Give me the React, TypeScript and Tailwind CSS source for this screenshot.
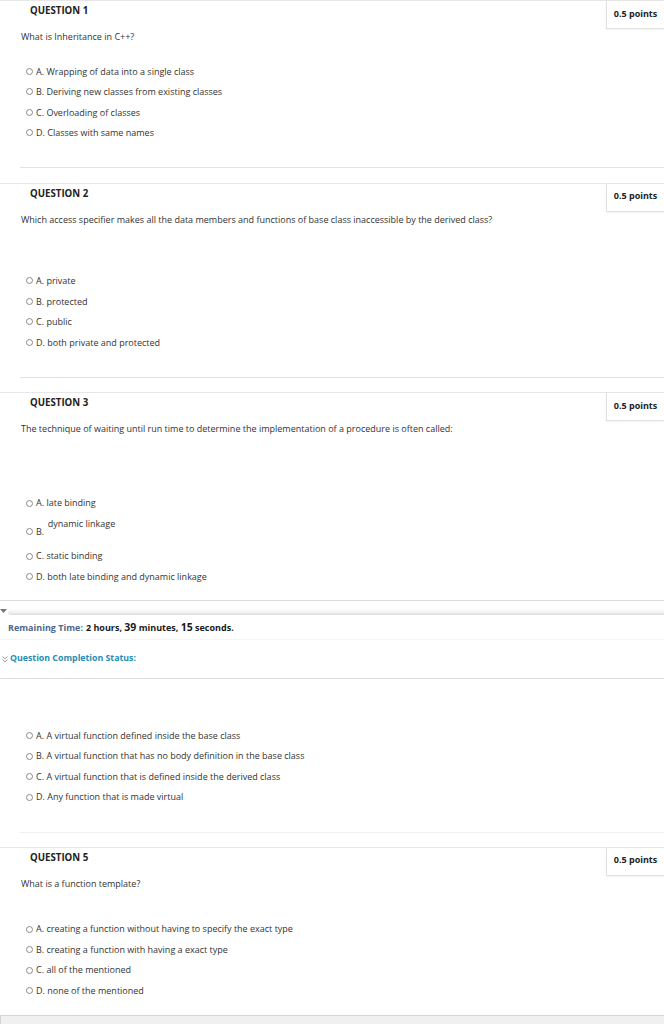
import React from 'react';

type Question = {
  num?: number;
  text?: string;
  gap: number;
  options: string[];
};

const Radio = () => (
  <span className="inline-block h-[7px] w-[7px] shrink-0 rounded-full border border-[#8a8a8a] bg-white" />
);

function Option({ label, text }: { label: string; text: string }) {
  return (
    <div className="flex h-[20.5px] items-center gap-[3.5px]">
      <Radio />
      <span>
        {label}. {text}
      </span>
    </div>
  );
}

function Header({ num }: { num: number }) {
  return (
    <div className="flex h-[28px] justify-between">
      <div className="pl-[30px] pt-[3px] text-[9.7px] leading-[14px] font-bold text-[#222]">QUESTION {num}</div>
      <div className="flex h-[28px] w-[58px] items-center justify-center border-b border-l border-[#e2e2e2] pb-[2px] text-[9px] font-bold text-[#222] shadow-[0_1px_2px_rgba(0,0,0,0.06)]">
        0.5 points
      </div>
    </div>
  );
}

function QuestionBlock({ q }: { q: Question }) {
  const letters = ['A', 'B', 'C', 'D'];
  return (
    <div className="border-t border-[#e6e6e6]">
      {q.num && <Header num={q.num} />}
      {q.text && <div className="mt-[2px] pl-[21px] leading-[12px]">{q.text}</div>}
      <div className="pl-[25.5px]" style={{ marginTop: q.gap }}>
        {q.options.map((o, i) => (
          <Option key={o} label={letters[i]} text={o} />
        ))}
      </div>
      <div className="mt-[24px] ml-[20px] h-px bg-[#e2e2e2]" />
      <div className="h-[14.5px]" />
    </div>
  );
}

const q1: Question = {
  num: 1,
  text: 'What is Inheritance in C++?',
  gap: 18,
  options: [
    'Wrapping of data into a single class',
    'Deriving new classes from existing classes',
    'Overloading of classes',
    'Classes with same names',
  ],
};

const q2: Question = {
  num: 2,
  text: 'Which access specifier makes all the data members and functions of base class inaccessible by the derived class?',
  gap: 45,
  options: ['private', 'protected', 'public', 'both private and protected'],
};

const q5: Question = {
  num: 5,
  text: 'What is a function template?',
  gap: 29,
  options: [
    'creating a function without having to specify the exact type',
    'creating a function with having a exact type',
    'all of the mentioned',
    'none of the mentioned',
  ],
};

export default function App() {
  return (
    <div className="w-[664px] h-[1024px] overflow-hidden bg-white font-['Open_Sans',sans-serif] text-[9px] text-[#333]">
      <QuestionBlock q={q1} />
      <QuestionBlock q={q2} />

      {/* question 3, cut by the timer panel */}
      <div className="border-t border-[#e6e6e6]">
        <Header num={3} />
        <div className="mt-[2px] pl-[21px] leading-[12px]">
          The technique of waiting until run time to determine the implementation of a procedure is often called:
        </div>
        <div className="mt-[58px] pl-[25.5px] leading-[12px]">
          <Option label="A" text="late binding" />
          <div className="flex h-[32.5px] items-start gap-[3.5px] pt-[12px]">
            <span className="flex h-[12px] items-center">
              <Radio />
            </span>
            <span>B.</span>
            <span className="-mt-[8px]">dynamic linkage</span>
          </div>
          <Option label="C" text="static binding" />
          <Option label="D" text="both late binding and dynamic linkage" />
        </div>
      </div>

      {/* timer panel */}
      <div className="mt-[13px] border-t border-[#dcdcdc]">
        <div className="flex h-[16px] items-center pt-[2px]">
          <svg width="7" height="4" viewBox="0 0 7 4" className="mt-[1px]">
            <path d="M0 0 L7 0 L3.5 4 Z" fill="#777" />
          </svg>
          <div className="ml-[1px] mt-[4px] h-[6px] flex-1 rounded-l-full bg-gradient-to-b from-[#fcfcfc] via-[#f3f3f3] to-[#dcdcdc]" />
        </div>
        <div className="flex h-[22px] items-center pl-[8px] font-bold">
          <span className="text-[9px] text-[#4f6690]">Remaining Time:</span>
          <span className="ml-[3px] text-[9px] text-[#1a1a1a]">
            2 hours, <span className="text-[10.5px]">39</span> minutes, <span className="text-[10.5px]">15</span> seconds.
          </span>
        </div>
        <div className="h-px bg-[#f6f6f6]" />
        <div className="flex h-[38px] items-center gap-[2px] pl-[2px] font-bold">
          <svg width="6" height="7" viewBox="0 0 6 7">
            <path d="M0.5 0.5 L3 2.8 L5.5 0.5 M0.5 3.5 L3 5.8 L5.5 3.5" fill="none" stroke="#9a9a9a" strokeWidth="1" />
          </svg>
          <span className="text-[8.8px] text-[#1f8db3]">Question Completion Status:</span>
        </div>
        <div className="h-px bg-[#dedede]" />
      </div>

      {/* question 4, header hidden behind panel */}
      <div>
        <div className="mt-[46.5px] pl-[25.5px] leading-[12px]">
          {[
            'A virtual function defined inside the base class',
            'A virtual function that has no body definition in the base class',
            'A virtual function that is defined inside the derived class',
            'Any function that is made virtual',
          ].map((o, i) => (
            <Option key={o} label={['A', 'B', 'C', 'D'][i]} text={o} />
          ))}
        </div>
        <div className="mt-[24px] ml-[20px] h-px bg-[#efefef]" />
        <div className="h-[14px]" />
      </div>

      <div className="border-t border-[#e6e6e6]">
        <Header num={5} />
        <div className="mt-[2.5px] pl-[21px] leading-[12px]">{q5.text}</div>
        <div className="mt-[29px] pl-[25.5px] leading-[12px]">
          {q5.options.map((o, i) => (
            <Option key={o} label={['A', 'B', 'C', 'D'][i]} text={o} />
          ))}
        </div>
      </div>

      <div className="mt-[14px] h-[20px] border-t border-l border-[#d4d4d4] bg-[#f0f0f0]" />
    </div>
  );
}
